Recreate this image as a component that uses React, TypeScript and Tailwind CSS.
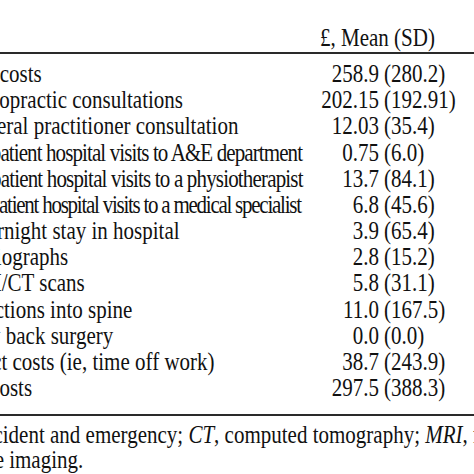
const rows: { label: string; mean: string; sd: string; sub?: boolean; track?: string }[] = [
  { label: "Direct costs", mean: "258.9", sd: "(280.2)" },
  { label: "Chiropractic consultations", mean: "202.15", sd: "(192.91)", sub: true },
  { label: "General practitioner consultation", mean: "12.03", sd: "(35.4)", sub: true },
  {
    label: "Outpatient hospital visits to A&E department",
    mean: "0.75",
    sd: "(6.0)",
    sub: true,
    track: "tracking-[-0.9px]",
  },
  {
    label: "Outpatient hospital visits to a physiotherapist",
    mean: "13.7",
    sd: "(84.1)",
    sub: true,
    track: "tracking-[-0.83px]",
  },
  {
    label: "Outpatient hospital visits to a medical specialist",
    mean: "6.8",
    sd: "(45.6)",
    sub: true,
    track: "tracking-[-1.25px]",
  },
  { label: "Overnight stay in hospital", mean: "3.9", sd: "(65.4)", sub: true },
  { label: "Radiographs", mean: "2.8", sd: "(15.2)", sub: true },
  { label: "MRI/CT scans", mean: "5.8", sd: "(31.1)", sub: true },
  { label: "Injections into spine", mean: "11.0", sd: "(167.5)", sub: true },
  { label: "Low back surgery", mean: "0.0", sd: "(0.0)", sub: true },
  { label: "Indirect costs (ie, time off work)", mean: "38.7", sd: "(243.9)" },
  { label: "Total costs", mean: "297.5", sd: "(388.3)" },
];

export default function App() {
  return (
    <div className="h-[474px] w-[474px] overflow-hidden bg-white font-['Liberation_Serif',serif] text-[21px] text-[#111]">
      <div className="ml-[-80px] w-[640px] whitespace-nowrap">
        {/* header */}
        <div className="flex scale-y-[1.2] pt-[22px] leading-[26px]">
          <div className="w-[400px]" />
          <div>£, Mean (SD)</div>
        </div>
        <div className="mt-[4px] border-t-2 border-[#2a2a2a]" />

        {/* body */}
        <div className="pt-[7px] pb-[13px]">
          {rows.map((r) => (
            <div key={r.label} className="flex scale-y-[1.2] leading-[26.17px]">
              <div className={`w-[400px] ${r.sub ? "pl-[42px]" : "pl-[22px]"}`}>
                <span className={r.track ?? ""}>{r.label}</span>
              </div>
              <div className="w-[59px] text-right">{r.mean}</div>
              <div className="pl-[5px]">{r.sd}</div>
            </div>
          ))}
        </div>
        <div className="border-t-2 border-[#2a2a2a]" />

        {/* footnote */}
        <div className="pt-[7px] leading-[25px]">
          <div className="scale-y-[1.2]">
            A&amp;E, accident and emergency; <i>CT</i>, computed tomography; <i>MRI</i>, magnetic
          </div>
          <div className="scale-y-[1.2]">resonance imaging.</div>
        </div>
      </div>
    </div>
  );
}
